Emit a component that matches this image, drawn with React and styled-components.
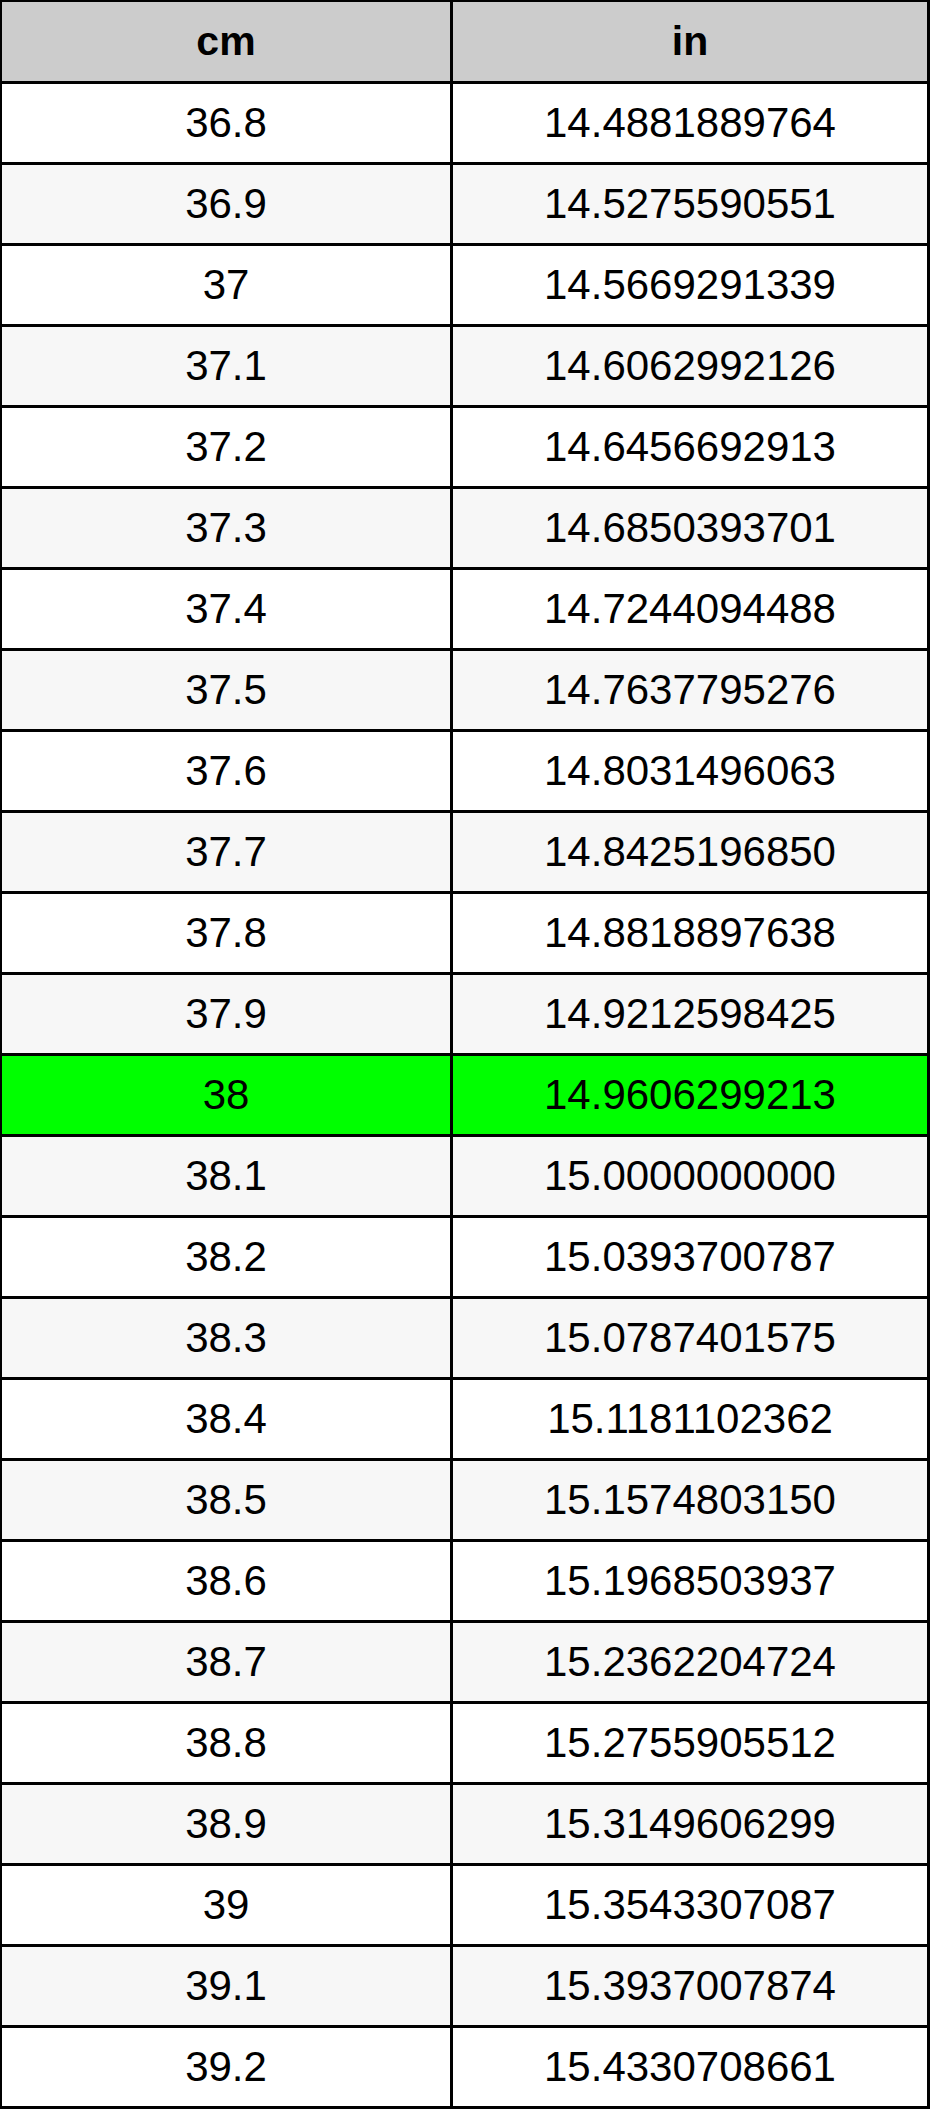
import React from "react";
import styled, { createGlobalStyle } from "styled-components";

const GlobalStyle = createGlobalStyle`
  html, body {
    margin: 0;
    padding: 0;
    background: #ffffff;
    overflow: hidden;
  }
`;

const rows = [
  ["36.8", "14.4881889764"],
  ["36.9", "14.5275590551"],
  ["37", "14.5669291339"],
  ["37.1", "14.6062992126"],
  ["37.2", "14.6456692913"],
  ["37.3", "14.6850393701"],
  ["37.4", "14.7244094488"],
  ["37.5", "14.7637795276"],
  ["37.6", "14.8031496063"],
  ["37.7", "14.8425196850"],
  ["37.8", "14.8818897638"],
  ["37.9", "14.9212598425"],
  ["38", "14.9606299213"],
  ["38.1", "15.0000000000"],
  ["38.2", "15.0393700787"],
  ["38.3", "15.0787401575"],
  ["38.4", "15.1181102362"],
  ["38.5", "15.1574803150"],
  ["38.6", "15.1968503937"],
  ["38.7", "15.2362204724"],
  ["38.8", "15.2755905512"],
  ["38.9", "15.3149606299"],
  ["39", "15.3543307087"],
  ["39.1", "15.3937007874"],
  ["39.2", "15.4330708661"],
];

const Table = styled.div`
  display: grid;
  grid-template-columns: 448px 474px;
  grid-template-rows: 79px repeat(${(p) => p.$count}, 78px);
  gap: 3px;
  padding: 3px;
  margin: -1px 0 0 -1px;
  width: max-content;
  background: #000000;
  font-family: "Liberation Sans", Arial, sans-serif;
  color: #000000;
`;

const Cell = styled.div`
  display: flex;
  align-items: center;
  justify-content: center;
  font-size: 42px;
  background: ${(p) =>
    p.$highlight ? "#00ff00" : p.$shade ? "#f7f7f7" : "#ffffff"};
`;

const HeadCell = styled(Cell)`
  background: #cccccc;
  font-weight: bold;
  font-size: 41px;
`;

export default function App() {
  return (
    <>
      <GlobalStyle />
      <Table $count={rows.length}>
        <HeadCell>cm</HeadCell>
        <HeadCell>in</HeadCell>
        {rows.map(([cm, inch], i) => {
          const highlight = cm === "38";
          const shade = i % 2 === 1;
          return (
            <React.Fragment key={cm}>
              <Cell $highlight={highlight} $shade={shade}>
                {cm}
              </Cell>
              <Cell $highlight={highlight} $shade={shade}>
                {inch}
              </Cell>
            </React.Fragment>
          );
        })}
      </Table>
    </>
  );
}
